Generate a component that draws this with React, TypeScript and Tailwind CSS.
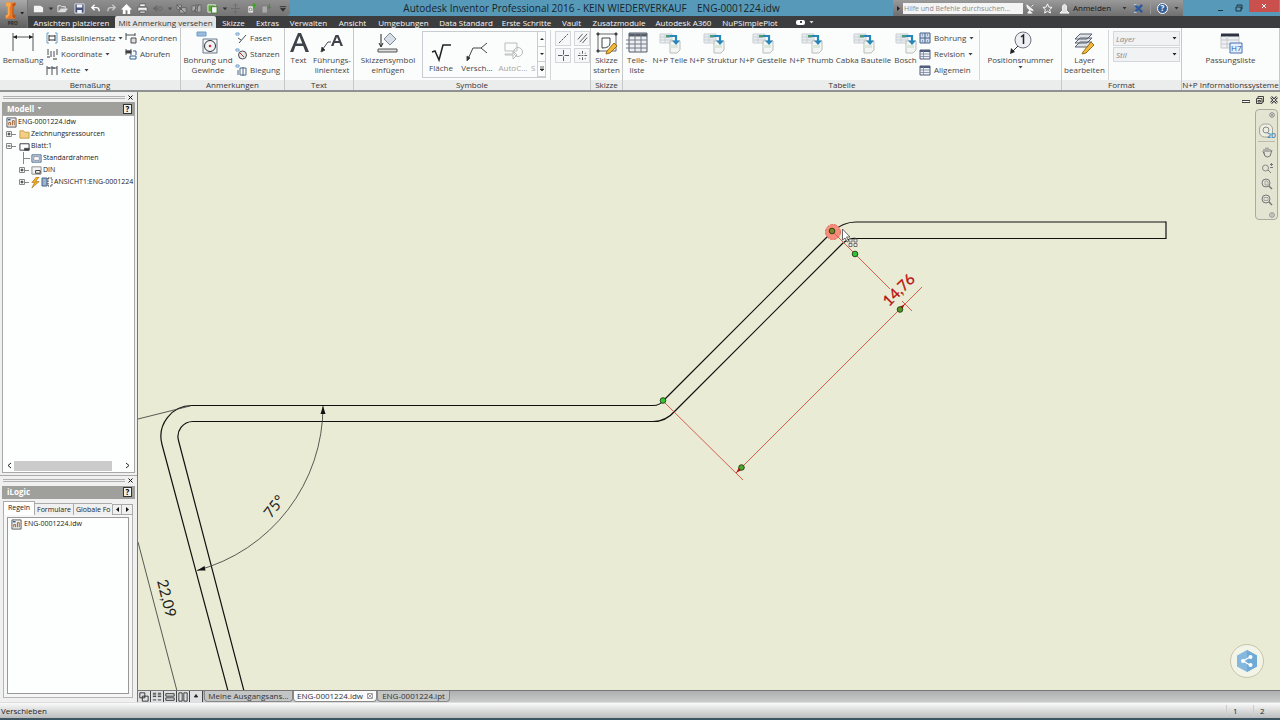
import React from "react";

type Kids = { children?: React.ReactNode };

function Ico({ s = "size-3", v = "0 0 12 12", children }: Kids & { s?: string; v?: string }) {
  return (
    <svg viewBox={v} className={`${s} shrink-0`} fill="none" stroke="#4a4f55" strokeWidth="1" aria-hidden="true">
      {children}
    </svg>
  );
}

function Caret({ c = "#444" }: { c?: string }) {
  return (
    <svg viewBox="0 0 5 3" className="h-[3px] w-[5px] shrink-0" aria-hidden="true">
      <path d="M.5 0h4L2.5 2.6z" fill={c} />
    </svg>
  );
}

/* ---------- quick access icons ---------- */
const quick: { name: string; art: React.ReactNode; w: string }[] = [
  { name: "Neu", w: "w-4", art: <path d="M1 3h7l3 2v5H1z" fill="#f5f5f5" stroke="none" /> },
  { name: "Neu Optionen", w: "w-2", art: <path d="M4 5h5L6.500 8z" fill="#333" stroke="none" /> },
  { name: "Öffnen", w: "w-[17px]", art: <><path d="M1 10V3h3l1 1h4v2" stroke="#eee" /><path d="M1 10l3-4h8l-3 4z" fill="#ddd" stroke="none" /></> },
  { name: "Speichern", w: "w-[17px]", art: <><path d="M1 1h10v10H1z" fill="#44517a" stroke="#dfe3ee" /><path d="M3 1.500h6v3.500H3zM3.500 7.500h5V11h-5z" fill="#f4f4f4" stroke="none" /></> },
  { name: "Rückgängig", w: "w-4", art: <path d="M5 2L2 5l3 3M2 5h5q3 0 3 4" stroke="#fff" strokeWidth="1.500" /> },
  { name: "Wiederherstellen", w: "w-[17px]", art: <path d="M7 2l3 3-3 3M10 5H5Q2 5 2 9" stroke="#c8c8c8" strokeWidth="1.500" /> },
  { name: "Start", w: "w-4", art: <path d="M0 7l6-6 6 6h-2v5H7V8H5v4H2V7z" fill="#fff" stroke="none" /> },
  { name: "Drucken", w: "w-4", art: <><path d="M3 1h6v3H3zM1 4.500h10V9H1zM3 8h6v3H3z" fill="#f2f2f2" stroke="#555" strokeWidth=".8" /></> },
  { name: "Auswahl zurück", w: "w-4", art: <><path d="M6 3L2 6l4 3M2 6h4" stroke="#666" strokeWidth="1.500" /><circle cx="9" cy="6" r="2" stroke="#666" /></> },
  { name: "Auswahl Optionen", w: "w-2", art: <path d="M4 5h5L6.500 8z" fill="#555" stroke="none" /> },
  { name: "Element wählen", w: "w-4", art: <><path d="M1 2h5v5H1zM4 5h7v6H4z" stroke="#666" fill="#aaa" /><path d="M1 2l9 9" stroke="#555" /></> },
  { name: "Fläche wählen", w: "w-4", art: <><path d="M1 3h6v6H1zM5 2h6v8H5z" stroke="#666" fill="#a9a9a9" /><path d="M3 9l6-7" stroke="#555" /></> },
  { name: "Aktualisieren", w: "w-4", art: <><path d="M1 2h8v8H1z" fill="#59a63c" stroke="#e7f2e0" /><path d="M5 4h6v7H5z" fill="#f4f4f4" stroke="#3b7b24" /></> },
  { name: "Aktualisieren Optionen", w: "w-2", art: <path d="M4 5h5L6.500 8z" fill="#333" stroke="none" /> },
  { name: "Verschieben", w: "w-4", art: <path d="M6 1v10M1 6h10M4 3l2-2 2 2M4 9l2 2 2-2" stroke="#6c6c6c" /> },
  { name: "Einchecken", w: "w-4", art: <><path d="M2 3h6v8H2z" fill="#eee" stroke="#777" /><circle cx="5" cy="7" r="1.500" stroke="#777" /><path d="M9 6V1M7 3l2-2 2 2" stroke="#45a12d" strokeWidth="1.500" /></> },
  { name: "Auschecken", w: "w-4", art: <><path d="M1 3h6v8H1z" fill="#aaa" stroke="#777" /><path d="M9 1v5M7 4l2 2 2-2" stroke="#4a7a3d" /></> },
  { name: "Anpassen", w: "w-4", art: <path d="M3 4h7M4 6h5L6.500 9z" stroke="#333" fill="#333" /> },
];

/* ---------- ribbon pieces ---------- */
function Group({ label, w, children }: Kids & { label: string; w: string }) {
  return (
    <section aria-label={label} className={`${w} flex shrink-0 flex-col border-r border-[#c6c8ca]`}>
      <div className="flex h-[52px] pt-0.5">{children}</div>
      <h2 className="h-[10px] overflow-visible bg-[#ebecec] text-center leading-[9px] whitespace-nowrap text-[#333]">{label}</h2>
    </section>
  );
}

function Big({ lines, w, art, off, drop }: { lines: string[]; w: string; art: React.ReactNode; off?: boolean; drop?: boolean }) {
  return (
    <button type="button" className={`${w} flex h-[48px] shrink-0 flex-col items-center pt-px leading-[10px] whitespace-nowrap ${off ? "text-[#a5a5a5]" : ""}`}>
      <Ico s="size-6" v="0 0 24 24">{art}</Ico>
      {lines.map((l) => <span key={l}>{l}</span>)}
      {drop && <span className="pt-px"><Caret /></span>}
    </button>
  );
}

function Small({ label, art, drop }: { label: string; art: React.ReactNode; drop?: boolean }) {
  return (
    <button type="button" className="flex h-4 items-center gap-[3px] whitespace-nowrap">
      <Ico>{art}</Ico>
      <span>{label}</span>
      {drop && <Caret />}
    </button>
  );
}

const TableMove = (
  <>
    <path d="M2 3h12v9H2z" fill="#e9edf0" stroke="#c9cfd4" />
    <path d="M2 6h12M2 9h12M7 3v9" stroke="#c9cfd4" />
    <path d="M12 10h10v9l-3 3h-7V10z" fill="#f3f5f2" stroke="#b9beb9" />
    <path d="M12 14h8v3h-8z" fill="#dde6da" stroke="none" />
    <path d="M8 5h10v6" stroke="#2787b8" strokeWidth="2.200" />
    <path d="M14 9.500h8L18 14z" fill="#2787b8" stroke="none" />
    <path d="M8 4h4v2.500H8z" fill="#4a9b78" stroke="none" />
  </>
);

const Grid = (
  <>
    <path d="M1 2h10v9H1z" fill="#eef1f6" stroke="#4f5d78" />
    <path d="M1 3h10" stroke="#4f5d78" strokeWidth="2" />
    <path d="M1 6h10M1 8.500h10M4.500 3v8" stroke="#7a88a2" strokeWidth=".8" />
  </>
);

const tabs: [string, string][] = [
  ["Ansichten platzieren", "w-[87px]"],
  ["Mit Anmerkung versehen", "w-[101px]"],
  ["Skizze", "w-[35px]"],
  ["Extras", "w-[33px]"],
  ["Verwalten", "w-[49px]"],
  ["Ansicht", "w-[39px]"],
  ["Umgebungen", "w-[63px]"],
  ["Data Standard", "w-[62px]"],
  ["Erste Schritte", "w-[59px]"],
  ["Vault", "w-[31px]"],
  ["Zusatzmodule", "w-[64px]"],
  ["Autodesk A360", "w-[65px]"],
  ["NuPSimplePlot", "w-[68px]"],
];

function Header() {
  return (
    <header className="flex h-7 shrink-0">
      <button type="button" aria-label="Anwendungsmenü" className="flex w-7 shrink-0 items-center border-r border-[#777] bg-linear-to-b from-[#a9a9a9] to-[#5f5f5f]">
        <svg viewBox="0 0 28 28" className="size-7" aria-hidden="true">
          <path d="M6 2h10v4h-2v9h2v4H6v-4h2V6H6z" fill="#e8792b" />
          <path d="M6 2h5v4h-1v9l-4 4v-4h2V6H6z" fill="#f7a84f" />
          <path d="M14 6l2-1V2l-3 2v13l3 2v-4h-2z" fill="#b9500f" />
          <path d="M21 12h4l-2 2.500z" fill="#222" />
          <text x="8" y="25.500" fontSize="5" fontWeight="700" fill="#2a2a2a">PRO</text>
        </svg>
      </button>
      <div className="flex min-w-0 flex-1 flex-col">
        <div className="flex h-4 bg-[#5799b8]">
          <div className="flex w-[262px] shrink-0 items-center rounded-br-sm bg-linear-to-b from-[#8f8f8f] to-[#747474] pl-[3px]">
            {quick.map((q) => (
              <button key={q.name} type="button" aria-label={q.name} className={`${q.w} flex shrink items-center justify-center`}>
                <Ico s="size-[11px]">{q.art}</Ico>
              </button>
            ))}
          </div>
          <h1 className="min-w-0 flex-1 text-center text-[10px] leading-[16px] whitespace-pre text-[#16242c]">{"Autodesk Inventor Professional 2016 - KEIN WIEDERVERKAUF    ENG-0001224.idw"}</h1>
          <div className="flex w-[387px] shrink-0 items-center bg-linear-to-b from-[#9a9a9a] to-[#707070]">
            <span className="flex w-2.5 justify-center" aria-hidden="true"><Ico s="size-[5px]" v="0 0 5 5"><path d="M1 0l3 2.500L1 5z" fill="#222" stroke="none" /></Ico></span>
            <input aria-label="Hilfe und Befehle durchsuchen" placeholder="Hilfe und Befehle durchsuchen..." className="h-[11px] w-[120px] bg-[#f4f4f4] px-px text-[7px] placeholder:text-[#8a8a8a]" />
            <div className="flex flex-1 items-center gap-1.5 pr-1 pl-0.5">
              <button type="button" aria-label="Kommunikation"><Ico s="size-[11px]"><path d="M2 2q0 6 7 6zM5 8l-2 3h5M7 4l2-2" stroke="#fff" fill="#eee" /></Ico></button>
              <button type="button" aria-label="Favoriten"><Ico s="size-[11px]"><path d="M6 1l1.500 3.500 3.500.3-2.700 2.400.9 3.800L6 9l-3.200 2 .9-3.800L1 4.800l3.500-.3z" stroke="#fff" /></Ico></button>
              <button type="button" className="flex items-center gap-[3px] text-[8px] leading-none text-[#151515]">
                <Ico s="size-[11px]"><path d="M1 11h10L8 8V3q-2-3-4 0v5z" fill="#ddd" stroke="#fff" /></Ico>
                Anmelden
              </button>
              <span className="ml-auto flex"><Caret c="#333" /></span>
              <button type="button" aria-label="Exchange Apps"><Ico s="size-[11px]"><path d="M2 2l8 8M10 2l-8 8" stroke="#2b5aa0" strokeWidth="2.500" /><path d="M1 2h3M1 10h3" stroke="#e8eef8" /></Ico></button>
              <span className="h-3 w-px bg-[#999]" />
              <button type="button" aria-label="Hilfe" className="flex size-[11px] shrink-0 items-center justify-center rounded-full border border-white bg-[#34609c] text-[8px] leading-none font-bold text-white">?</button>
              <Caret c="#333" />
            </div>
            <div className="flex h-4 w-[97px] shrink-0 items-center bg-[#5799b8]">
              <button type="button" aria-label="Minimieren" className="flex w-9 justify-end pt-1"><span className="mr-[-4px] h-px w-[5px] bg-[#1c3440]" /></button>
              <button type="button" aria-label="Wiederherstellen" className="w-[30px]"><Ico s="ml-4 size-2" v="0 0 8 8"><path d="M2 2V1h5v4H6M1 3h5v4H1z" stroke="#1c3440" /></Ico></button>
              <button type="button" aria-label="Schließen" className="mb-1 flex h-3 w-[30px] items-center justify-center bg-[#c9504c]"><Ico s="size-[6px]" v="0 0 6 6"><path d="M1 1l4 4M5 1L1 5" stroke="#fff" /></Ico></button>
            </div>
          </div>
        </div>
        <nav aria-label="Registerkarten" className="flex h-3 bg-[#3c3d3e] text-[8px] leading-[11px]">
          {tabs.map(([t, w], i) => (
            <button key={t} type="button" className={`${w} shrink-0 text-center whitespace-nowrap ${i === 1 ? "rounded-t-xs bg-[#e2e3e4] text-[#333]" : "font-medium text-[#f6f6f6]"}`}>{t}</button>
          ))}
          <button type="button" aria-label="Multifunktionsleiste minimieren" className="ml-3 flex items-center gap-1">
            <span className="flex h-[5px] w-[9px] items-center justify-center rounded-xs bg-white"><span className="size-[2px] bg-[#444]" /></span>
            <Caret c="#ddd" />
          </button>
        </nav>
      </div>
    </header>
  );
}

function Tiny({ name, children }: Kids & { name: string }) {
  return (
    <button type="button" aria-label={name} className="flex h-[15px] w-4 items-center justify-center border border-[#d3d6da] bg-[#f6f7f8]">
      <Ico s="size-[11px]">{children}</Ico>
    </button>
  );
}

function StyleSelect({ name }: { name: string }) {
  return (
    <div className="flex h-[15px] items-center border border-[#d5d8db] bg-[#f1f2f3] pr-0.5">
      <select aria-label={name} className="min-w-0 flex-1 appearance-none bg-transparent pl-0.5 text-[8px] leading-3 text-[#888] italic">
        <option>{name}</option>
      </select>
      <Caret c="#222" />
    </div>
  );
}

function Ribbon() {
  return (
    <div className="flex h-16 shrink-0 border-b-2 border-[#8f9292] bg-[#fbfcfc] text-[8px] text-[#454545]">
      <Group label="Bemaßung" w="w-[181px]">
        <Big w="w-[46px]" lines={["Bemaßung"]} art={<><path d="M2 2v18M22 2v18M2 6h20" stroke="#555" /><path d="M2 6l4-2v4zM22 6l-4-2v4z" fill="#222" stroke="none" /></>} />
        <div className="w-[79px] shrink-0">
          <Small label="Basisliniensatz" drop art={<><path d="M3 1H1v10h2M9 1h2v10H9" stroke="#6b9cc4" /><path d="M3 3v6M9 3v6M3 4h6M3 8h6" stroke="#333" /></>} />
          <Small label="Koordinate" drop art={<><path d="M2 1v6M5 3v6M8 3v6M11 1v6" /><path d="M1 9h3M7 11h4" stroke="#333" /></>} />
          <Small label="Kette" drop art={<path d="M1 2v9M6 2v9M11 2v9M1 4h10M3 3v2M8 3v2" />} />
        </div>
        <div className="shrink-0">
          <Small label="Anordnen" art={<><path d="M1 1v7M10 1v3M1 3h9" /><path d="M6 6h5v5H6z" fill="#ddd" /></>} />
          <Small label="Abrufen" art={<><path d="M1 1v6M6 1v6M1 3h5" /><path d="M1 3h5v2H1z" fill="#333" /><path d="M5 8h6v3H5zM8 3h3v4" stroke="#2e5f92" /></>} />
        </div>
      </Group>
      <Group label="Anmerkungen" w="w-[104px]">
        <Big w="w-[54px]" lines={["Bohrung und", "Gewinde"]} art={<><path d="M1 1h9v4H1z" fill="#9bbcdd" stroke="#6f9cc9" /><path d="M7 8h14v14H7z" fill="#f1f3f5" stroke="#6b7b8c" /><circle cx="14" cy="15" r="5.500" stroke="#333" /><circle cx="14" cy="15" r="1.300" fill="#c33" stroke="none" /></>} />
        <div>
          <Small label="Fasen" art={<><path d="M1 1h3v2H1z" stroke="#6f9cc9" /><path d="M4 11l7-8M3 6l3 2" /></>} />
          <Small label="Stanzen" art={<><path d="M1 1h3v2H1z" stroke="#6f9cc9" /><circle cx="7.500" cy="7" r="4" fill="#e8e8e8" /><path d="M5 5l4 4" stroke="#b33" /></>} />
          <Small label="Biegung" art={<><path d="M1 1h3v2H1z" stroke="#6f9cc9" /><path d="M5 4h6v7H5zM8 3v9M3 6v5" stroke="#4d6a86" /></>} />
        </div>
      </Group>
      <Group label="Text" w="w-[69px]">
        <Big w="w-[27px]" lines={["Text"]} art={<path d="M3 21L11 2h3l8 19h-3.500l-2.300-6H8.500L6.300 21zM9.500 12.500h5.800L12.400 5z" fill="#3e434a" stroke="none" />} />
        <Big w="w-[40px]" lines={["Führungs-", "linientext"]} art={<><path fillRule="evenodd" d="M11 15l4.500-11h3L23 15h-2.500l-1-3h-5l-1 3zM15.300 10h3.400L17 6z" fill="#3e434a" stroke="none" /><path d="M11 11H8l-6 8" /><path d="M1 21l1-5 3 3z" fill="#222" /></>} />
      </Group>
      <Group label="Symbole" w="w-[237px]">
        <Big w="w-[68px]" lines={["Skizzensymbol", "einfügen"]} art={<><path d="M5 3v12M3 12l2 4 2-4" stroke="#222" /><path d="M14 2l6 6-6 6-6-6z" fill="#d8dde6" stroke="#7c8797" /><path d="M2 18h19v3H2z" fill="#ddd" stroke="#555" /></>} />
        <div className="mt-px flex h-[47px] w-[124px] shrink-0 overflow-hidden border border-[#c9ccd0] pt-1.5">
          <Big w="w-9" lines={["Fläche"]} art={<path d="M3 13l3-1 4 9L14 6h8" stroke="#222" strokeWidth="1.500" />} />
          <Big w="w-9" lines={["Versch..."]} art={<><path d="M3 20L8 9h8l6-5M16 9l6 5" stroke="#444" /><path d="M2 22l0-5 3 2z" fill="#222" /></>} />
          <Big w="w-9" off lines={["AutoC..."]} art={<><path d="M4 4h12v8H4zM4 16h8v4l4-4-4-4v3H4z" stroke="#bbb" /><circle cx="17" cy="13" r="4.500" stroke="#bbb" /></>} />
          <span className="w-1.5 shrink-0 pt-[25px] leading-[10px] text-[#aaa]">S</span>
          <div className="-mt-1.5 flex flex-1 flex-col">
            {["Nach oben", "Nach unten", "Alle anzeigen"].map((n, i) => (
              <button key={n} type="button" aria-label={n} className="flex flex-1 items-center justify-center border-b border-l border-[#c9ccd0]">
                <svg viewBox="0 0 6 6" className="size-[6px]" aria-hidden="true"><path d={i === 0 ? "M1 4l2-2 2 2z" : i === 1 ? "M1 2h4L3 4z" : "M1 1h4M1 3h4L3 5z"} fill="#222" stroke={i === 2 ? "#222" : "none"} strokeWidth=".7" /></svg>
              </button>
            ))}
          </div>
        </div>
        <div className="ml-1 w-px shrink-0 bg-[#d5d7d9]" />
        <div className="mt-px ml-1 grid h-8 grid-cols-2 gap-x-[3px] gap-y-px">
          <Tiny name="Mittellinie"><path d="M1 11L11 1" strokeDasharray="3 1" /></Tiny>
          <Tiny name="Symmetrielinie"><path d="M1 7l5-6M3 10l8-9M6 11l5-6" /></Tiny>
          <Tiny name="Mittelpunkt"><path d="M6 0v5M6 7v5M0 6h5M7 6h5" /></Tiny>
          <Tiny name="Zentrierte Anordnung"><path d="M6 1v3M6 8v3M1 6h3M8 6h3M5 6h2M3 3v1M9 3v1M3 9v1M9 9v1" /></Tiny>
        </div>
      </Group>
      <Group label="Skizze" w="w-8">
        <Big w="w-[31px]" lines={["Skizze", "starten"]} art={<><path d="M3 3h18v17H3z" stroke="#666" /><path d="M2 2h2v2H2zM20 2h2v2h-2zM2 19h2v2H2z" fill="#222" /><path d="M7 7h8v5q0 5-8 5z" stroke="#444" /><path d="M12 20l7-8 3 3-7 7-4 1z" fill="#f0b93c" stroke="#9a6b1b" /></>} />
      </Group>
      <section aria-label="Tabelle" className="flex min-w-0 flex-1 flex-col border-r border-[#c6c8ca]">
        <div className="flex h-[52px] pt-0.5">
          <Big w="w-[28px]" lines={["Teile-", "liste"]} art={<><path d="M4 2h18v19H4z" fill="#eceef1" stroke="#555d6a" /><path d="M4 4h18" stroke="#555d6a" strokeWidth="3" /><path d="M1 9h21M1 13h21M1 17h21M10 3v18M16 3v18" stroke="#737b88" /></>} />
          <Big w="w-[38px]" lines={["N+P Teile"]} art={TableMove} />
          <Big w="w-[49px]" lines={["N+P Struktur"]} art={TableMove} />
          <Big w="w-[50px]" lines={["N+P Gestelle"]} art={TableMove} />
          <Big w="w-[47px]" lines={["N+P Thumb"]} art={TableMove} />
          <Big w="w-[57px]" lines={["Cabka Bauteile"]} art={TableMove} />
          <Big w="w-[27px]" lines={["Bosch"]} art={TableMove} />
          <div className="w-[61px] shrink-0 border-r border-[#d5d7d9]">
            <Small label="Bohrung" drop art={<><path d="M1 1h10v10H1z" fill="#cfdcec" stroke="#46618a" /><path d="M1 6h10M6 1v10M3 3h1M8 3h1M3 9h1M8 9h1" stroke="#46618a" /></>} />
            <Small label="Revision" drop art={Grid} />
            <Small label="Allgemein" art={Grid} />
          </div>
          <Big w="flex-1" drop lines={["Positionsnummer"]} art={<><circle cx="14" cy="9" r="8" fill="#eef0f4" stroke="#6c7380" /><path d="M12 6l2.500-2v9" stroke="#222" strokeWidth="1.500" /><path d="M9 15l-6 6" stroke="#333" /><path d="M1 23l1-6 4 4z" fill="#222" stroke="none" /></>} />
        </div>
        <h2 className="h-[10px] bg-[#ebecec] text-center leading-[9px] text-[#333]">Tabelle</h2>
      </section>
      <Group label="Format" w="w-[120px]">
        <Big w="w-[45px]" lines={["Layer", "bearbeiten"]} art={<><path d="M7 3h12l-5 5H2zM7 7h12l-5 5H2zM7 11h12l-5 5H2z" fill="#dfe3e8" stroke="#59616d" /><path d="M10 21l8-10 3 3-8 8-4 1z" fill="#f0b93c" stroke="#9a6b1b" /></>} />
        <div className="ml-px w-px shrink-0 bg-[#d5d7d9]" />
        <div className="mt-px ml-1 flex w-[67px] flex-col gap-px">
          <StyleSelect name="Layer" />
          <StyleSelect name="Stil" />
        </div>
      </Group>
      <Group label="N+P Informationssysteme" w="w-[98px]">
        <Big w="w-full" lines={["Passungsliste"]} art={<><path d="M2 4h18v13H2z" fill="#eef0f2" stroke="#c5c9cc" /><path d="M2 4h18" stroke="#2c3442" strokeWidth="3" /><path d="M2 9h18M2 13h18M8 5v12" stroke="#c5c9cc" /><path d="M11 12h12v10H11z" fill="#e5efff" stroke="#4a6fb0" /><text x="12" y="20" fontSize="8" fill="#2d57a8" stroke="none">H7</text></>} />
      </Group>
    </div>
  );
}

/* ---------- side panels ---------- */
function Grip() {
  return (
    <div className="flex h-[10px] shrink-0 items-center gap-0.5 pr-[3px] pl-[3px]">
      <div className="h-[3px] flex-1 border-y border-[#b0b0b0]" />
      <button type="button" aria-label="Schließen" className="flex size-[7px] items-center justify-center"><Ico s="size-[5px]" v="0 0 5 5"><path d="M.5.5l4 4M4.500.5l-4 4" stroke="#111" /></Ico></button>
    </div>
  );
}

function PanelHead({ title, drop }: { title: string; drop?: boolean }) {
  return (
    <div className="mx-0.5 flex h-[13px] shrink-0 items-center gap-[3px] bg-[#9fa09c] pr-[3px] pl-[5px] text-[8px] font-bold text-white">
      {title}
      {drop && <Caret c="#fff" />}
      <button type="button" aria-label="Hilfe" className="ml-auto flex h-[10px] w-[9px] items-center justify-center border border-[#333] bg-[#f2f2e8] text-[8px] leading-none text-black">?</button>
    </div>
  );
}

function DocIcon() {
  return <Ico s="size-[11px]"><path d="M1 1h10v10H1z" fill="#eee" stroke="#555" /><path d="M3 9V6h2v3M7 9V4h2v5" stroke="#9a5a2a" /><path d="M2 3h3" stroke="#2e5f92" strokeWidth="1.500" /></Ico>;
}

function Node({ pad, box, art, label }: { pad: string; box?: string; art: React.ReactNode; label: string }) {
  return (
    <li className={`${pad} flex h-3 items-center whitespace-nowrap`}>
      {box !== undefined && (
        <svg viewBox="0 0 12 12" className="mr-px size-3 shrink-0" fill="none" stroke="#888" aria-hidden="true">
          <path d="M8 6.500h4" />
          {box ? <path d="M2.500 3.500h5v5h-5z" fill="#fff" /> : <path d="M5.500 0v12M5.500 6.500H8" />}
          {box && <path d={box === "+" ? "M3.500 6h3M5 4.500v3" : "M3.500 6h3"} stroke="#222" />}
        </svg>
      )}
      {art}
      <span className="pl-px">{label}</span>
    </li>
  );
}

function Side() {
  return (
    <aside className="flex w-[137px] shrink-0 flex-col overflow-hidden bg-[#f0f0f0] text-[7px] text-[#222]">
      <Grip />
      <PanelHead title="Modell" drop />
      <div className="mx-0.5 flex min-h-0 flex-[359_1_0%] flex-col border border-[#a8a8a8] bg-[#fdfefe]">
        <ul className="flex-1 overflow-hidden">
          <Node pad="pl-[3px]" label="ENG-0001224.idw" art={<DocIcon />} />
          <Node pad="pl-px" box="+" label="Zeichnungsressourcen" art={<span className="pl-0.5"><Ico s="size-[11px]"><path d="M1 2h4l1 1.500h5V10H1z" fill="#f2cf86" stroke="#c99b45" /></Ico></span>} />
          <Node pad="pl-px" box="-" label="Blatt:1" art={<span className="pl-0.5"><Ico s="size-[11px]"><path d="M1 3h10v7H1z" fill="#fff" stroke="#333" /><path d="M6 8h5v2H6z" fill="#333" /></Ico></span>} />
          <Node pad="pl-[15px]" box="" label="Standardrahmen" art={<Ico s="size-[11px]"><path d="M1 2h10v8H1z" fill="#d6e2f0" stroke="#44628a" /><path d="M3 4h6v4H3z" fill="#fff" stroke="#333" strokeDasharray="1 1" /></Ico>} />
          <Node pad="pl-[14px]" box="+" label="DIN" art={<span className="pl-px"><Ico s="size-[11px]"><path d="M1 2h10v8H1z" fill="#f3f3f3" stroke="#888" /><path d="M5 6h5v3H5z" stroke="#333" /></Ico></span>} />
          <Node pad="pl-[14px]" box="+" label="ANSICHT1:ENG-0001224" art={<><Ico s="size-[11px]"><path d="M7 0L2 6h3l-3 6 8-7H6l4-5z" fill="#f6b31c" stroke="#9a5a10" strokeWidth=".6" /></Ico><Ico s="size-3"><path d="M1 2h5v8H1z" fill="#9db3cc" stroke="#44628a" /><path d="M7 2h4v8H7z" stroke="#333" strokeDasharray="1.500 1" /></Ico></>} />
        </ul>
        <div className="flex h-3 items-center justify-between px-[3px]">
          <button type="button" aria-label="Nach links"><Ico s="size-[7px]" v="0 0 7 7"><path d="M5 1L2 3.500 5 6" stroke="#222" /></Ico></button>
          <div className="mr-3 ml-px h-[10px] flex-1 bg-[#cbcbcb]" />
          <button type="button" aria-label="Nach rechts"><Ico s="size-[7px]" v="0 0 7 7"><path d="M2 1l3 2.500L2 6" stroke="#222" /></Ico></button>
        </div>
      </div>
      <div className="mt-[2px] border-t border-[#aaa]" />
      <Grip />
      <PanelHead title="iLogic" />
      <div className="mt-0.5 flex h-[14px] shrink-0 items-end pr-1 pl-[3px] leading-3">
        <button type="button" className="h-[14px] w-8 shrink-0 border border-b-0 border-[#aaa] bg-white">Regeln</button>
        <button type="button" className="h-3 w-[39px] shrink-0 border-t border-r border-[#aaa]">Formulare</button>
        <button type="button" className="h-3 min-w-0 flex-1 border-t border-[#aaa] pl-[2px] text-left whitespace-nowrap">Globale Fo</button>
        <button type="button" aria-label="Vorherige" className="flex h-[11px] w-[10px] items-center justify-center border border-[#aaa]"><Ico s="size-[5px]" v="0 0 5 5"><path d="M4 0v5L1 2.500z" fill="#111" stroke="none" /></Ico></button>
        <button type="button" aria-label="Nächste" className="flex h-[11px] w-[11px] items-center justify-center border border-l-0 border-[#aaa]"><Ico s="size-[5px]" v="0 0 5 5"><path d="M1 0v5l3-2.500z" fill="#111" stroke="none" /></Ico></button>
      </div>
      <div className="mr-1 mb-1 ml-[3px] flex min-h-0 flex-[179_1_0%] border border-t-0 border-[#b5b5b5] bg-[#f6f6f6] px-[3px] pt-0.5 pb-[3px]">
        <div className="min-w-0 flex-1 border border-[#999] bg-[#fdfefe]">
          <div className="flex h-[14px] items-center gap-0.5 pl-[3px]"><DocIcon />ENG-0001224.idw</div>
        </div>
      </div>
    </aside>
  );
}

/* ---------- drawing sheet ---------- */
function Dot({ x, y, c }: { x: number; y: number; c: string }) {
  return <circle cx={x} cy={y} r="2.800" fill={c} stroke="#1d3d12" strokeWidth=".9" />;
}

function Sheet() {
  return (
    <svg className="absolute inset-0 h-full w-full" aria-label="Zeichnung ENG-0001224" role="img">
      <g transform="translate(-138 -92)" fill="none" className="[font-family:Lato,sans-serif]">
        <g stroke="#111" strokeWidth="1.200">
          <path d="M1166 222H856Q843 222 832 232L664 400Q660 405.500 653 405.500H192A31 31 0 0 0 162 444.500L228 691" />
          <path d="M1166 238.500H856Q849 238 843 243L675 411Q666 421.500 653 421.500H193A15 15 0 0 0 178.500 440.500L244 691" />
          <path d="M1166 221.500v17.500" />
        </g>
        <g stroke="#333" strokeWidth=".8">
          <path d="M138 419L190 406M138 542L177 691" />
          <path d="M323 406A170 170 0 0 1 197 570.500" />
        </g>
        <path d="M323 406l2.500 8h-5zM197 570.500l7.500-4.500 1 4.500z" fill="#111" />
        <circle cx="833" cy="232" r="7.500" fill="#f58c7c" stroke="#e06a5c" strokeDasharray="3 1" />
        <g stroke="#d4614e" strokeWidth="1">
          <path d="M833 232L890 289" />
          <path d="M663 401L743 480" />
          <path d="M736 473L922 287" />
          <path d="M902 301L912 311" />
        </g>
        <path d="M736 473l6.500-3.500-3-3zM905 304l-6.500 3.500 3 3z" fill="#c00c0c" />
        <Dot x={832} y={231} c="#7d8420" />
        <Dot x={855} y={254} c="#35c435" />
        <Dot x={900} y={309.500} c="#5a9427" />
        <Dot x={741.500} y={467.500} c="#4fa52e" />
        <Dot x={663} y={400.500} c="#35c435" />
        <text transform="translate(889 307) rotate(-45)" fontSize="15" fill="#b81010" stroke="#b81010" strokeWidth=".3">14,76</text>
        <text transform="translate(271 519) rotate(-52)" fontSize="15" fill="#222">75°</text>
        <text transform="translate(157 581) rotate(76)" fontSize="15" fill="#222">22,09</text>
        <path d="M842.500 229v11l2.500-2 2 4 1.500-1-2-4h3.500z" fill="#fff" stroke="#444" strokeWidth=".8" />
        <path d="M849 239h3v3h-3zM854 239h3v3h-3zM849 243.500h3v3h-3zM854 243.500h3v3h-3z" fill="#eee" stroke="#555" strokeWidth=".8" />
      </g>
    </svg>
  );
}

const navTools: [string, React.ReactNode][] = [
  ["Pan", <path d="M3 7L1.500 5.500M3 8V3M5 6V1.500M7 6V1.500M9 6V3M3 7q0 4 3.500 4T10 7l1-3" stroke="#777" />],
  ["Zoom", <><circle cx="4.500" cy="6" r="3" stroke="#888" /><path d="M7 8l3 3M9 2.500h3M10.500 1v3M9 5.500h3" stroke="#777" /></>],
  ["Zoom Alles", <><circle cx="5" cy="5" r="4" stroke="#777" /><path d="M8 8l3 3" stroke="#777" strokeWidth="1.500" /><path d="M4 3h2l1 1v3H4z" stroke="#999" strokeWidth=".8" /></>],
  ["Zoom Fenster", <><circle cx="5" cy="5" r="4" stroke="#777" /><path d="M8 8l3 3" stroke="#777" strokeWidth="1.500" /><path d="M3 3.500h4v3H3z" stroke="#999" strokeWidth=".8" /></>],
];

function Canvas() {
  return (
    <main className="relative min-h-0 flex-1 overflow-hidden bg-[#e9ebd4]">
      <Sheet />
      <div className="absolute top-1 right-0.5 flex items-center gap-1.5">
        <button type="button" aria-label="Fenster minimieren"><Ico s="size-[8px]" v="0 0 8 8"><path d="M0 4.500h8v2H0z" fill="#fff" stroke="#444" /></Ico></button>
        <button type="button" aria-label="Fenster wiederherstellen"><Ico s="size-[8px]" v="0 0 8 8"><path d="M2 2V.5h5.500V6H6M.5 2.500H6v5H.5zM2 4.500h2.500v1.500H2z" stroke="#444" /></Ico></button>
        <button type="button" aria-label="Fenster schließen"><Ico s="size-[8px]" v="0 0 8 8"><path d="M1 1l6 6M7 1L1 7" stroke="#444" strokeWidth="2.500" /><path d="M1 1l6 6M7 1L1 7" stroke="#fff" strokeWidth=".8" /></Ico></button>
      </div>
      <div className="absolute top-[17px] right-0.5 flex w-[23px] flex-col items-center rounded-sm border border-[#a9aaa0] bg-[#e3e5d2] pb-px">
        <button type="button" aria-label="Leiste schließen" className="mt-0.5 mr-0.5 self-end"><Ico s="size-[6px]" v="0 0 6 6"><circle cx="3" cy="3" r="2.300" stroke="#888" /><path d="M2 2l2 2M4 2L2 4" stroke="#888" strokeWidth=".7" /></Ico></button>
        <button type="button" aria-label="Steuerungsrad" className="mt-1"><Ico s="size-[18px]" v="0 0 18 18"><rect x="1.500" y="2" width="13" height="13" rx="5" stroke="#a2a499" fill="#edeee2" /><circle cx="8" cy="8" r="3" stroke="#888" /><text x="9" y="16" fontSize="7" fontWeight="700" fill="#5c93bd" stroke="none">2D</text></Ico></button>
        <div className="mt-px mb-0.5 h-px w-[17px] bg-[#b9bbab]" />
        {navTools.map(([n, a]) => (
          <button key={n} type="button" aria-label={n} className="flex h-4 items-center"><Ico>{a}</Ico></button>
        ))}
        <button type="button" aria-label="Leiste anpassen" className="mt-1 mr-0.5 self-end"><Ico s="size-[6px]" v="0 0 6 6"><circle cx="3" cy="3" r="2.300" stroke="#888" /><path d="M2 2.500h2L3 4z" fill="#888" stroke="none" /></Ico></button>
      </div>
      <button type="button" aria-label="Teilen" className="absolute right-4 bottom-3 flex size-[34px] items-center justify-center rounded-full border border-[#c9c4aa] bg-[#f3f4e8]">
        <svg viewBox="0 0 24 24" className="size-6" aria-hidden="true">
          <path d="M12 1l10 5.500v11L12 23 2 17.500v-11z" fill="#84b8df" />
          <path d="M12 1l10 5.500v11L12 23z" fill="#6fa9d6" />
          <path d="M15 8l-7 4 7 4" stroke="#fff" strokeWidth="1.200" fill="none" />
          <circle cx="15.500" cy="8" r="2" fill="#fff" /><circle cx="8" cy="12" r="2" fill="#fff" /><circle cx="15.500" cy="16" r="2" fill="#fff" />
        </svg>
      </button>
    </main>
  );
}

function DocTabs() {
  const views: [string, string][] = [
    ["Überlappend", "M1 1h6v6H1zM4 5h7v6H4z"],
    ["Kacheln", "M1 1.500h4M7 1.500h4M1 5.500h4M7 5.500h4M1 9.500h4M7 9.500h4M1 3.500h4M7 3.500h4"],
    ["Horizontal", "M1 2h10v3H1zM1 7h10v3H1z"],
    ["Vertikal", "M1 1h4v10H1zM7 1h4v10H7z"],
    ["Liste", "M4 6l2-3 2 3z"],
  ];
  return (
    <div className="flex h-3 shrink-0 border-t border-[#777] bg-linear-to-b from-[#aeb0b0] to-[#c9caca] text-[8px] leading-[10px] text-[#333]">
      {views.map(([n, d]) => (
        <button key={n} type="button" aria-label={n} className="flex w-[13px] shrink-0 items-center justify-center border-r border-[#444] bg-[#dfe1e2]">
          <Ico s="size-[10px]"><path d={d} stroke="#222" fill={n === "Liste" ? "#222" : "none"} /></Ico>
        </button>
      ))}
      <button type="button" className="ml-px w-[89px] rounded-b-sm border border-t-0 border-[#888] bg-[#c4c6c6] whitespace-nowrap">Meine Ausgangsans...</button>
      <button type="button" className="flex w-[84px] items-center justify-center gap-1 rounded-b-sm border border-t-0 border-[#888] bg-[#fbfbfb] whitespace-nowrap">
        ENG-0001224.idw
        <Ico s="size-[6px]" v="0 0 6 6"><path d="M.5.5h5v5h-5zM1 1l4 4M5 1L1 5" stroke="#888" strokeWidth=".8" /></Ico>
      </button>
      <button type="button" className="w-[73px] rounded-b-sm border border-t-0 border-[#888] bg-[#c4c6c6] whitespace-nowrap">ENG-0001224.ipt</button>
    </div>
  );
}

export default function App() {
  return (
    <div className="flex h-screen flex-col overflow-hidden bg-[#f0f0f0] [font-family:'Open_Sans','Noto_Sans',sans-serif]">
      <Header />
      <Ribbon />
      <div className="flex min-h-0 flex-1">
        <Side />
        <div className="flex min-w-0 flex-1 flex-col border-l border-[#777]">
          <Canvas />
          <DocTabs />
        </div>
      </div>
      <footer className="flex h-[18px] shrink-0 items-center border-t border-b-2 border-t-[#ddd] border-b-[#3c5563] bg-linear-to-b from-[#fafafa] to-[#bcbdbe] text-[8px] text-[#222]">
        <span className="flex-1 pl-px">Verschieben</span>
        <span className="w-[27px] border-l border-[#ccc] pl-1.5">1</span>
        <span className="w-[27px] border-l border-[#ccc] pl-1.5">2</span>
      </footer>
    </div>
  );
}
